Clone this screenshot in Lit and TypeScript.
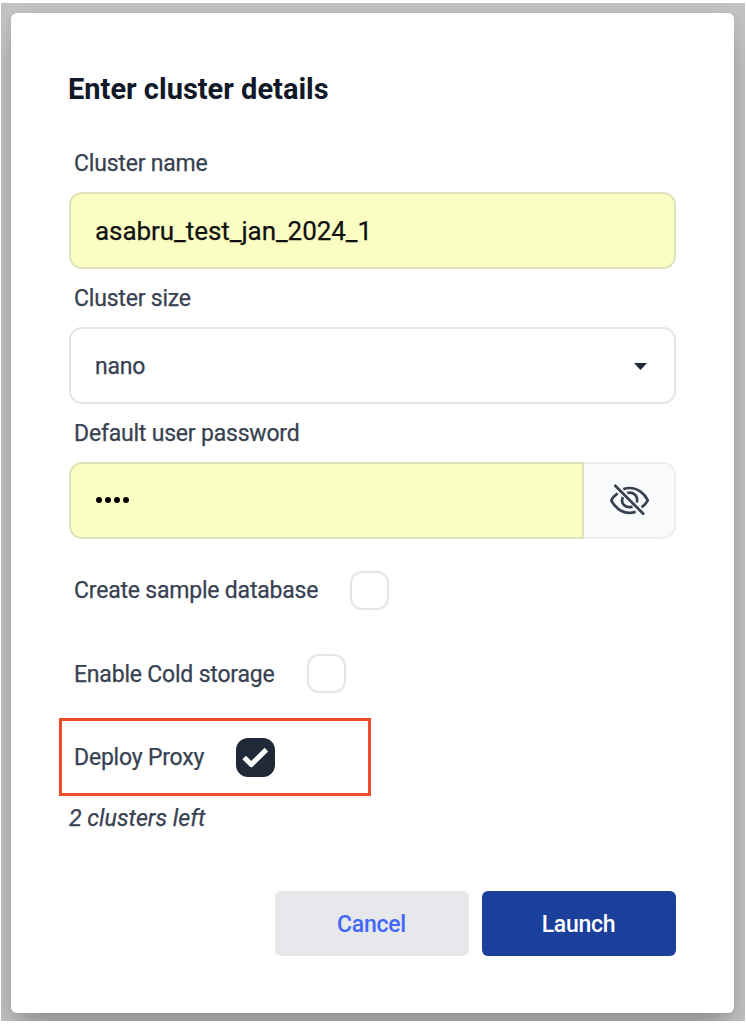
import { LitElement, html, css, svg } from "lit";
import { customElement, property, state } from "lit/decorators.js";
import { classMap } from "lit/directives/class-map.js";

@customElement("check-row")
class CheckRow extends LitElement {
  @property() label = "";
  @property({ type: Boolean, reflect: true }) checked = false;

  static styles = css`
    :host {
      display: flex;
      align-items: center;
      gap: 32px;
    }
    .label {
      white-space: nowrap;
      padding-top: 2px;
    }
    .box {
      box-sizing: border-box;
      width: 39px;
      height: 39px;
      padding: 0;
      border: 2px solid #e4e5e7;
      border-radius: 12px;
      background: #fff;
      display: flex;
      align-items: center;
      justify-content: center;
    }
    .box.on {
      background: #1f2937;
      border-color: #1f2937;
    }
    .tick {
      display: block;
      flex: none;
    }
  `;

  render() {
    return html`
      <span class="label">${this.label}</span>
      <button
        class=${classMap({ box: true, on: this.checked })}
        role="checkbox"
        aria-checked=${this.checked}
        aria-label=${this.label}
        @click=${() => (this.checked = !this.checked)}
      >
        ${this.checked
          ? html`<svg class="tick" width="39" height="39" viewBox="0 0 39 39">
              <path d="M8.2 19.4 L15.2 26.6 L30.4 11.6" fill="none" stroke="#fff" stroke-width="5" stroke-linejoin="round" />
            </svg>`
          : null}
      </button>
    `;
  }
}

@customElement("app-root")
class AppRoot extends LitElement {
  @state() private name = "asabru_test_jan_2024_1";

  static styles = css`
    :host {
      display: block;
      box-sizing: border-box;
      height: 1024px;
      padding: 3px 1px;
      background: #fff;
      font-family: Roboto, "Liberation Sans", sans-serif;
      font-size: 23px;
      line-height: 30px;
      letter-spacing: -0.2px;
      -webkit-text-stroke: 0.25px currentColor;
      color: #374151;
    }
    .backdrop {
      box-sizing: border-box;
      height: 1018px;
      padding: 10px 11px 8px 10px;
      background: #c2c2c2;
      overflow: hidden;
    }
    .card {
      box-sizing: border-box;
      height: 1000px;
      padding: 56px 58px 0;
      border-radius: 6px;
      background: #fff;
      box-shadow: 0 20px 30px -6px rgba(0, 0, 0, 0.25), 0 2px 12px rgba(0, 0, 0, 0.06);
    }
    .title {
      margin: 0 0 40px -1px;
      font-size: 29px;
      line-height: 40px;
      font-weight: 700;
      letter-spacing: 0;
      -webkit-text-stroke: 0;
      color: #111827;
    }
    .label {
      display: block;
      padding-left: 5px;
      margin-bottom: 13px;
    }
    .field {
      box-sizing: border-box;
      height: 77px;
      margin-bottom: 15px;
      display: flex;
      align-items: center;
      width: 607px;
      border: 2px solid #e4e5e7;
      border-radius: 13px;
      background: #fff;
      padding: 0 24px;
    }
    .filled {
      background: #fafec3;
      border-color: #dfe2b9;
      color: #111;
    }
    .name {
      font-size: 26px;
      letter-spacing: -0.06px;
    }
    .select {
      justify-content: space-between;
      padding-top: 2px;
    }
    .group {
      display: flex;
      width: 607px;
    }
    .password {
      flex: 1;
      width: auto;
      margin: 0;
      border-radius: 13px 0 0 13px;
      gap: 3px;
      padding-bottom: 1px;
    }
    .dot {
      width: 6px;
      height: 6px;
      margin-left: 0.5px;
      margin-right: -0.5px;
      border-radius: 50%;
      background: #000;
    }
    .reveal {
      box-sizing: border-box;
      width: 92px;
      height: 77px;
      padding: 0 0 1px 0;
      border: 2px solid #eceef1;
      border-left: 0;
      border-radius: 0 13px 13px 0;
      background: #f8fafc;
      display: flex;
      align-items: center;
      justify-content: center;
    }
    .caret {
      margin-right: 3px;
    }
    .checks {
      padding: 9px 0 0 5px;
      display: flex;
      flex-direction: column;
    }
    .row {
      height: 84px;
    }
    .second {
      height: 83px;
    }
    .marked {
      box-sizing: border-box;
      width: 312px;
      height: 78px;
      margin: 3px 0 0 -15px;
      padding-left: 12px;
      border: 3px solid #ee4a2c;
    }
    .note {
      margin: 7px 0 0 0;
      font-size: 23.2px;
      font-style: italic;
      letter-spacing: 0;
    }
    .actions {
      display: flex;
      justify-content: flex-end;
      gap: 13px;
      margin: 58px 0 0 0;
    }
    .btn {
      width: 194px;
      height: 65px;
      padding: 2px 1px 0 0;
      border: 0;
      border-radius: 6px;
      font: inherit;
      font-weight: 500;
      letter-spacing: -0.25px;
      -webkit-text-stroke: 0;
      background: #e7e8ec;
      color: #4367f6;
    }
    .primary {
      background: #1a409b;
      color: #fff;
    }
  `;

  private eyeOff() {
    return svg`
      <g fill="none" stroke="#374151" stroke-width="2.7">
        <path d="M4.5 4 L34 33.5" />
        <path d="M7.6 12.4 C4.5 14.6 2.2 17.3 1.2 19.3 C4.5 26 11.2 31.8 19.5 31.8 C21.6 31.8 23.7 31.4 25.6 30.7" />
        <path d="M13.3 8.2 C15.3 7.4 17.4 7 19.5 7 C27.8 7 34.5 12.6 37.8 19.3 C36.6 21.6 34.6 24.2 31.6 26.3" />
        <path d="M12.9 16 C10.1 22.2 15.3 28 22.5 25.6" />
        <path d="M17.2 12 C23.5 10.5 28.5 15 26.8 21.5" />
      </g>`;
  }

  render() {
    return html`
      <div class="backdrop">
        <main class="card">
          <h1 class="title">Enter cluster details</h1>
          <span class="label">Cluster name</span>
          <div class="field filled name">${this.name}</div>
          <span class="label">Cluster size</span>
          <div class="field select">
            <span>nano</span>
            <svg class="caret" width="13" height="7" viewBox="0 0 13 7">
              <path d="M0 0 H13 L6.5 7 Z" fill="#1f2937" />
            </svg>
          </div>
          <span class="label">Default user password</span>
          <div class="group">
            <div class="field filled password">
              ${[0, 1, 2, 3].map(() => html`<i class="dot"></i>`)}
            </div>
            <button class="reveal" aria-label="Show password">
              <svg width="39" height="38" viewBox="0 0 39 38">${this.eyeOff()}</svg>
            </button>
          </div>
          <section class="checks">
            <check-row class="row" label="Create sample database"></check-row>
            <check-row class="row second" label="Enable Cold storage"></check-row>
            <check-row class="marked" label="Deploy Proxy" checked></check-row>
          </section>
          <p class="note">2 clusters left</p>
          <div class="actions">
            <button class="btn">Cancel</button>
            <button class="btn primary">Launch</button>
          </div>
        </main>
      </div>
    `;
  }
}
